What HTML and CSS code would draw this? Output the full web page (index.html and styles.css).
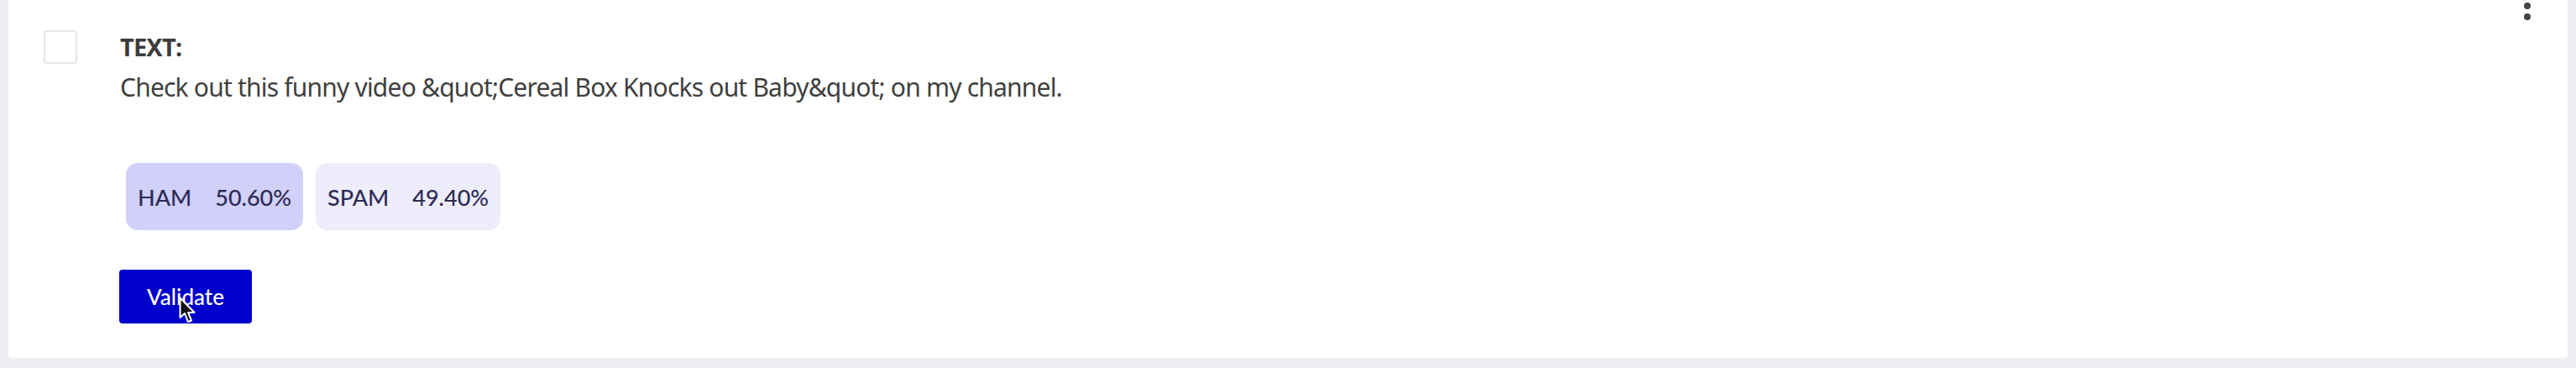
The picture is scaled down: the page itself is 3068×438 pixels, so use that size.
FILE: index.html
```html
<!DOCTYPE html>
<html lang="en">

<head>
    <meta charset="UTF-8">
    <meta name="viewport" content="width=device-width, initial-scale=1.0">
    <title>Prediction</title>
    <link rel="stylesheet" href="styles.css">
</head>

<body>
    <div class="card">
        <!-- 更多操作 -->
        <div class="more">
            <svg width="8" height="34" viewBox="0 0 8 34">
                <circle cx="4" cy="4" r="4" fill="#444" />
                <circle cx="4" cy="17" r="4" fill="#444" />
                <circle cx="4" cy="30" r="4" fill="#444" />
            </svg>
        </div>

        <div class="check"></div>

        <div class="content">
            <div class="label">TEXT:</div>
            <p class="text">Check out this funny video &amp;quot;Cereal Box Knocks out Baby&amp;quot; on my channel.</p>

            <div class="scores">
                <div class="score active">
                    <span>HAM</span>
                    <span>50.60%</span>
                </div>
                <div class="score">
                    <span>SPAM</span>
                    <span>49.40%</span>
                </div>
            </div>

            <div class="actions">
                <button class="validate">Validate</button>
                <!-- 鼠标指针 -->
                <svg class="pointer" width="22" height="33" viewBox="0 0 22 33">
                    <path d="M1.5 1.5 L1.5 25 L7 20 L11 30 L15 28.5 L11 19 L18.5 19 Z" fill="#111" stroke="#fff" stroke-width="2" stroke-linejoin="round" />
                </svg>
            </div>
        </div>
    </div>
</body>

</html>
```

FILE: styles.css
```css
* {
    margin: 0;
    padding: 0;
    box-sizing: border-box;
}

body {
    background-color: #eceef4;
    padding: 0 10px 12px 10px;
    font-family: "Noto Sans", sans-serif;
}

.card {
    position: relative;
    display: flex;
    height: 426px;
    padding: 36px 0 0 42px;
    background-color: #fff;
    border-radius: 0 0 4px 4px;
    overflow: hidden;
}

.more {
    position: absolute;
    top: -10px;
    right: 44px;
    line-height: 0;
}

.check {
    flex: none;
    width: 40px;
    height: 40px;
    border: 2px solid #e4e5ea;
    border-radius: 3px;
}

.content {
    margin-left: 51px;
}

.label {
    height: 40px;
    line-height: 40px;
    font-size: 29px;
    font-weight: bold;
    color: #3c3c3c;
    letter-spacing: -0.8px;
}

.text {
    margin-top: 8px;
    line-height: 40px;
    font-size: 30px;
    color: #3f3f3f;
    letter-spacing: -0.8px;
}

.scores {
    display: flex;
    gap: 15px;
    margin-top: 70px;
    margin-left: 7px;
}

.score {
    display: flex;
    align-items: center;
    gap: 28px;
    height: 80px;
    padding: 0 14px;
    border-radius: 14px;
    background-color: #ededfb;
    font-family: "Lato", sans-serif;
    font-size: 27px;
    font-weight: 500;
    color: #2d2b55;
}

.score.active {
    background-color: #d0d0f9;
}

.actions {
    position: relative;
    margin-top: 47px;
    margin-left: -1px;
}

.validate {
    width: 158px;
    height: 64px;
    border: none;
    border-radius: 4px;
    background-color: #0000cd;
    color: #fff;
    font-family: "Lato", sans-serif;
    font-size: 26px;
    font-weight: 500;
}

.pointer {
    position: absolute;
    left: 71px;
    top: 32px;
}
```
